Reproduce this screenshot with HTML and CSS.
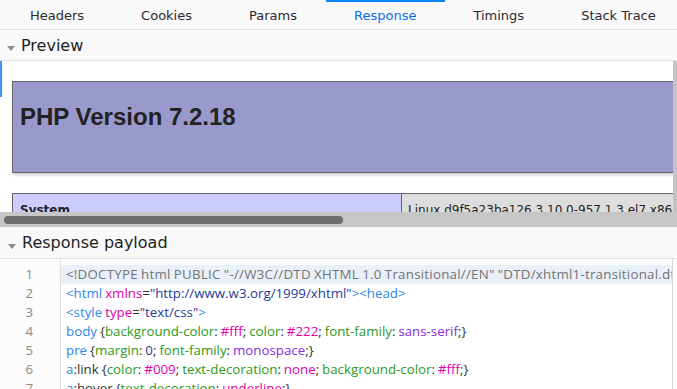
FILE: index.html
```html
<!DOCTYPE html>
<html>
<head>
<meta charset="utf-8">
<link rel="stylesheet" href="styles.css">
</head>
<body>
<div class="panel">
  <nav class="tabs">
    <div class="tab">Headers</div>
    <div class="tab">Cookies</div>
    <div class="tab">Params</div>
    <div class="tab active">Response</div>
    <div class="tab">Timings</div>
    <div class="tab">Stack Trace</div>
  </nav>
  <div class="sec-head"><span class="twisty"></span><span class="sec-title">Preview</span></div>
  <div class="preview">
    <div class="focus-line"></div>
    <div class="php-page">
      <div class="php-h">PHP Version 7.2.18</div>
      <div class="php-row">
        <div class="cell-e">System</div>
        <div class="cell-v">Linux d9f5a23ba126 3.10.0-957.1.3.el7.x86_64 #1 SMP</div>
      </div>
    </div>
    <div class="vscroll"></div>
  </div>
  <div class="hscroll"><div class="thumb"></div></div>
  <div class="sec-head sec-head2"><span class="twisty"></span><span class="sec-title">Response payload</span></div>
  <div class="code">
    <div class="gutter">
      <div class="ln">1</div><div class="ln">2</div><div class="ln">3</div><div class="ln">4</div><div class="ln">5</div><div class="ln">6</div><div class="ln">7</div>
    </div>
    <div class="lines">
      <div class="line current"><span class="meta">&lt;!DOCTYPE html PUBLIC "-//W3C//DTD XHTML 1.0 Transitional//EN" "DTD/xhtml1-transitional.dtd"&gt;</span></div>
      <div class="line"><span class="tag">&lt;html</span> <span class="attr">xmlns</span>=<span class="str">"http://www.w3.org/1999/xhtml"</span><span class="tag">&gt;&lt;head&gt;</span></div>
      <div class="line"><span class="tag">&lt;style</span> <span class="attr">type</span>=<span class="str">"text/css"</span><span class="tag">&gt;</span></div>
      <div class="line"><span class="sel">body</span> {<span class="prop">background-color</span>: <span class="kw">#fff</span>; <span class="prop">color</span>: <span class="kw">#222</span>; <span class="prop">font-family</span>: <span class="val">sans-serif</span>;}</div>
      <div class="line"><span class="sel">pre</span> {<span class="prop">margin</span>: <span class="num">0</span>; <span class="prop">font-family</span>: <span class="val">monospace</span>;}</div>
      <div class="line"><span class="sel">a</span>:link {<span class="prop">color</span>: <span class="kw">#009</span>; <span class="prop">text-decoration</span>: <span class="kw">none</span>; <span class="prop">background-color</span>: <span class="kw">#fff</span>;}</div>
      <div class="line"><span class="sel">a</span>:hover {<span class="prop">text-decoration</span>: <span class="kw">underline</span>;}</div>
    </div>
  </div>
</div>
</body>
</html>
```
FILE: styles.css
```css
* { box-sizing: border-box; }
html, body { margin: 0; padding: 0; }
body {
  width: 677px;
  height: 389px;
  overflow: hidden;
  background: #ffffff;
  font-family: "DejaVu Sans", sans-serif;
  color: #222;
}
.panel { display: flex; flex-direction: column; width: 677px; height: 389px; }

.tabs {
  display: flex;
  height: 30px;
  padding-left: 1.5px;
  background: #f9f9fa;
  border-bottom: 1px solid #e0e0e2;
  flex: none;
  overflow: hidden;
}
.tab {
  flex: none;
  white-space: nowrap;
  padding: 6px 28.5px 0;
  font-size: 13px;
  line-height: 16px;
  color: #2a2a2e;
  border-top: 2px solid transparent;
}
.tab.active { color: #0a6ee8; border-top-color: #0a84ff; }

.sec-head {
  flex: none;
  height: 31px;
  display: flex;
  align-items: center;
  background: #f9f9fa;
  border-bottom: 1px solid #e0e0e2;
  padding-left: 7px;
  font-size: 16px;
  color: #1e1e1e;
}
.sec-head2 { height: 32px; padding-left: 8px; }
.twisty {
  width: 0; height: 0;
  border-left: 4.5px solid transparent;
  border-right: 4.5px solid transparent;
  border-top: 5px solid #8c8c8c;
  margin: 7px 6px 0 0;
}
.sec-title { line-height: 19px; }

.preview {
  position: relative;
  flex: none;
  height: 151px;
  overflow: hidden;
  background: #fff;
}
.focus-line {
  position: absolute;
  left: 0; top: 0;
  width: 2px; height: 36px;
  background: #3d92f0;
}
.php-page { padding: 20px 0 0 12px; width: 900px; }
.php-h {
  height: 92px;
  background: #9999cc;
  border: 1px solid #666;
  box-shadow: 1px 2px 3px #ccc;
  padding: 21px 0 0 7px;
  font-family: "Liberation Sans", Arial, sans-serif;
  font-weight: bold;
  font-size: 24px;
  line-height: 28px;
  color: #222;
}
.php-row {
  margin-top: 20px;
  display: flex;
  border: 1px solid #666;
  height: 30px;
}
.cell-e {
  width: 389px;
  background: #ccccff;
  border-right: 1px solid #666;
  font-weight: bold;
  font-size: 12px;
  padding: 9px 0 0 7px;
  color: #222;
}
.cell-v {
  flex: 1;
  background: #dddddd;
  font-size: 12px;
  padding: 9px 0 0 6px;
  color: #222;
  white-space: nowrap;
}
.vscroll {
  position: absolute;
  right: 0; top: 0;
  width: 4px; height: 100%;
  background: #c4c4c4;
}

.hscroll {
  flex: none;
  height: 15px;
  background: #c6c6c6;
  padding: 4px 0 0 4px;
}
.thumb {
  width: 339px;
  height: 8px;
  border-radius: 4px;
  background: #6e6e6e;
}

.code {
  flex: 1;
  display: flex;
  background: #fff;
  overflow: hidden;
  border-right: 1px solid #d7d7db;
  width: 673px;
  font-family: "Open Sans", sans-serif;
}
.gutter {
  flex: none;
  width: 61px;
  border-right: 1px solid #e0e0e2;
  background: #fcfcfc;
  padding-top: 6px;
}
.ln {
  height: 19px;
  line-height: 19px;
  font-size: 13.3px;
  color: #8a8a8a;
  text-align: right;
  padding-right: 27px;
}
.lines { flex: 1; padding-top: 6px; overflow: hidden; }
.line {
  height: 19px;
  line-height: 19px;
  white-space: pre;
  font-size: 13.3px;
  padding-left: 5px;
  color: #333;
  word-spacing: -0.5px;
}
.line.current { background: #e9f0fa; }
.meta { color: #737373; letter-spacing: 0.25px; }
.tag { color: #2f86e6; }
.attr { color: #dd00a9; }
.str { color: #1e3c96; }
.sel { color: #2f86e6; }
.prop { color: #2c9a22; }
.kw { color: #dd00a9; }
.val { color: #8a2be2; }
.num { color: #1e3c96; }
```
